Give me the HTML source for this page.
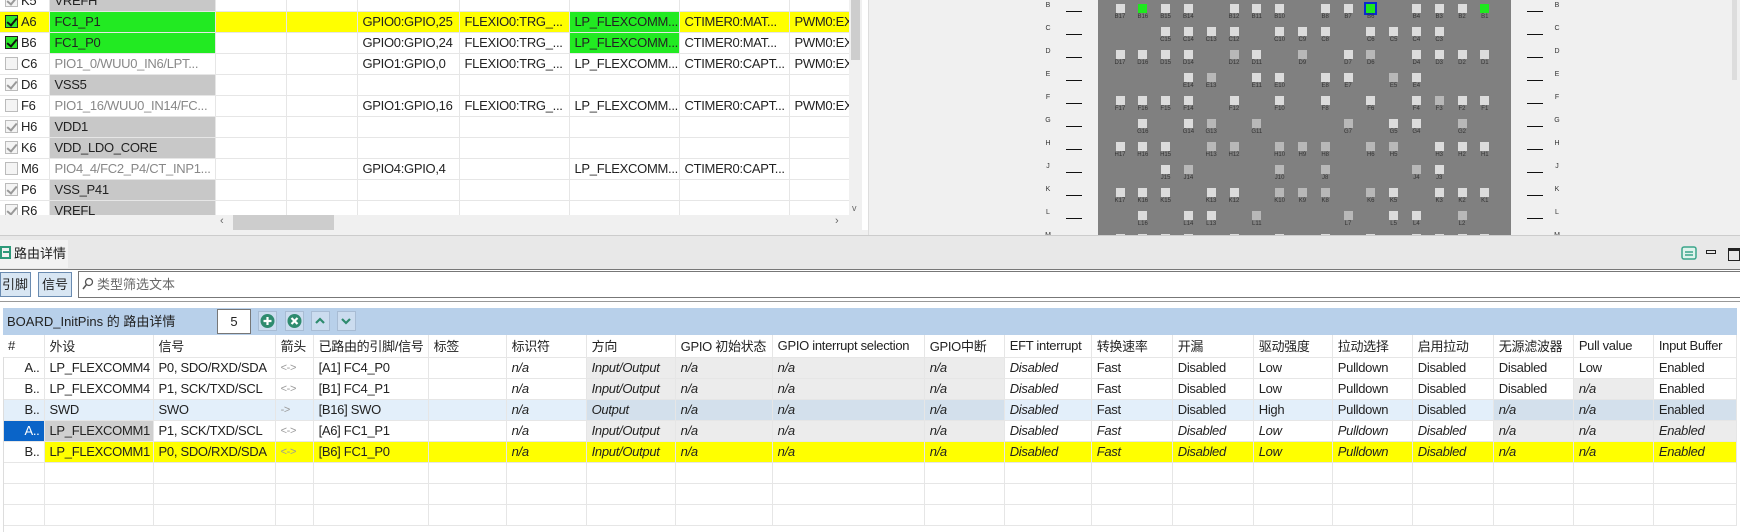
<!DOCTYPE html>
<html><head><meta charset="utf-8">
<style>
*{box-sizing:border-box;margin:0;padding:0}
body{width:1740px;height:532px;overflow:hidden;background:#fff;font-family:"Liberation Sans","Noto Sans CJK SC",sans-serif;font-size:13px;color:#222;position:relative}
.abs{position:absolute}
table{border-collapse:collapse;table-layout:fixed}
td{white-space:nowrap;overflow:hidden;padding:0 0 0 5px;border-right:1px solid #e6e6e6;border-bottom:1px solid #e6e6e6;height:21px;letter-spacing:-0.3px}
#top td{height:21px}
.cb{display:inline-block;width:13px;height:13px;border:1px solid #bbb;background:#f4f4f4;vertical-align:-2px;margin-right:3px;position:relative}
.cb.on{border-color:#222;background:#2ce62c}
.cb.ck::after{content:"";position:absolute;left:3px;top:0px;width:4px;height:8px;border:solid #999;border-width:0 2px 2px 0;transform:rotate(40deg)}
.cb.on::after{border-color:#111}
.g{background:#c8c8c8}.gr{background:#22ea22}.y{background:#ffff00}.gy{color:#888}
#bt td{height:21px}
.i{font-style:italic}
.pg{background:#ececec}
.sw td{background:#e3effa}
.sw td.pb{background:#d3e0ec}
.yl td{background:#ffff00}
.arr{color:#999;font-size:11px}
.pin{position:absolute;width:9px;height:9px;background:#dcdcdc}
.pl{position:absolute;font-size:6px;color:#333;width:20px;text-align:center}
</style></head><body>

<div class="abs" style="left:0;top:0;width:870px;height:236px;background:#fff;overflow:hidden">
<table id="top" class="abs" style="left:0;top:-10px;width:849px">
<colgroup><col style="width:49px"><col style="width:166px"><col style="width:71px"><col style="width:71px"><col style="width:102px"><col style="width:110px"><col style="width:110px"><col style="width:110px"><col style="width:60px"></colgroup>
<tr><td><span class="cb ck"></span>K5</td><td class="g">VREFH</td><td></td><td></td><td></td><td></td><td></td><td></td><td></td></tr>
<tr class="y"><td><span class="cb on ck"></span>A6</td><td class="gr">FC1_P1</td><td></td><td></td><td>GPIO0:GPIO,25</td><td>FLEXIO0:TRG_...</td><td class="gr">LP_FLEXCOMM...</td><td>CTIMER0:MAT...</td><td>PWM0:EX</td></tr>
<tr><td><span class="cb on ck"></span>B6</td><td class="gr">FC1_P0</td><td></td><td></td><td>GPIO0:GPIO,24</td><td>FLEXIO0:TRG_...</td><td class="gr">LP_FLEXCOMM...</td><td>CTIMER0:MAT...</td><td>PWM0:EX</td></tr>
<tr><td><span class="cb"></span>C6</td><td class="gy">PIO1_0/WUU0_IN6/LPT...</td><td></td><td></td><td>GPIO1:GPIO,0</td><td>FLEXIO0:TRG_...</td><td>LP_FLEXCOMM...</td><td>CTIMER0:CAPT...</td><td>PWM0:EX</td></tr>
<tr><td><span class="cb ck"></span>D6</td><td class="g">VSS5</td><td></td><td></td><td></td><td></td><td></td><td></td><td></td></tr>
<tr><td><span class="cb"></span>F6</td><td class="gy">PIO1_16/WUU0_IN14/FC...</td><td></td><td></td><td>GPIO1:GPIO,16</td><td>FLEXIO0:TRG_...</td><td>LP_FLEXCOMM...</td><td>CTIMER0:CAPT...</td><td>PWM0:EX</td></tr>
<tr><td><span class="cb ck"></span>H6</td><td class="g">VDD1</td><td></td><td></td><td></td><td></td><td></td><td></td><td></td></tr>
<tr><td><span class="cb ck"></span>K6</td><td class="g">VDD_LDO_CORE</td><td></td><td></td><td></td><td></td><td></td><td></td><td></td></tr>
<tr><td><span class="cb"></span>M6</td><td class="gy">PIO4_4/FC2_P4/CT_INP1...</td><td></td><td></td><td>GPIO4:GPIO,4</td><td></td><td>LP_FLEXCOMM...</td><td>CTIMER0:CAPT...</td><td></td></tr>
<tr><td><span class="cb ck"></span>P6</td><td class="g">VSS_P41</td><td></td><td></td><td></td><td></td><td></td><td></td><td></td></tr>
<tr><td><span class="cb ck"></span>R6</td><td class="g">VREFL</td><td></td><td></td><td></td><td></td><td></td><td></td><td></td></tr>
</table>
<div class="abs" style="left:849px;top:0;width:13px;height:215px;background:#f0f0f0"><div style="position:absolute;top:0;left:2px;width:9px;height:60px;background:#cdcdcd"></div><div style="position:absolute;bottom:2px;left:3px;font-size:9px;color:#666">v</div></div>
<div class="abs" style="left:0;top:215px;width:862px;height:15px;background:#f0f0f0">
<div style="position:absolute;left:233px;top:0;width:101px;height:15px;background:#cdcdcd"></div>
<div style="position:absolute;left:220px;top:0;font-size:11px;color:#666">&lsaquo;</div>
<div style="position:absolute;left:835px;top:0;font-size:11px;color:#666">&rsaquo;</div></div>
<div class="abs" style="left:0;top:230px;width:870px;height:6px;background:#f0f0f0"></div>
</div>
<div class="abs" style="left:868px;top:0;width:6px;height:236px;background:#f0f0f0;border-left:1px solid #ddd"></div>

<div class="abs" id="chip" style="left:874px;top:0;width:866px;height:236px;background:#f0f0f0;overflow:hidden">
<div class="abs" style="left:224px;top:0;width:413px;height:236px;background:#808080"></div>
<div class="abs" style="left:858px;top:0;width:5px;height:80px;background:#ddd"></div>
</div>
<div class="abs" style="left:0;top:235px;width:1740px;height:1px;background:#ccc"></div>

<div class="abs" style="left:0;top:236px;width:1740px;height:34px;background:#e8e8e8;border-bottom:1px solid #777"></div>
<div class="abs" style="left:0;top:240px;width:68px;height:28px;background:#f2f2f2;font-size:13px;line-height:28px;padding-left:14px">路由详情</div>
<svg class="abs" style="left:0;top:246px" width="12" height="14"><rect x="1" y="1" width="9" height="11" fill="none" stroke="#2e9a7a" stroke-width="2"/><line x1="3" y1="6" x2="9" y2="6" stroke="#2e9a7a" stroke-width="2"/></svg>
<svg class="abs" style="left:1681px;top:246px" width="16" height="16"><rect x="1" y="1" width="14" height="12" rx="2" fill="#dff3ec" stroke="#3aa58a" stroke-width="1.5"/><line x1="4" y1="6" x2="12" y2="6" stroke="#3aa58a" stroke-width="1.5"/><line x1="4" y1="9" x2="12" y2="9" stroke="#3aa58a" stroke-width="1.5"/></svg>
<div class="abs" style="left:1706px;top:250px;width:10px;height:4px;border:1px solid #222"></div>
<div class="abs" style="left:1728px;top:248px;width:12px;height:13px;border:1px solid #222;border-top-width:3px"></div>

<div class="abs" style="left:0;top:272px;width:31px;height:25px;background:#d8e6f3;border:1px solid #6a8bb0;line-height:23px;padding-left:1px">引脚</div>
<div class="abs" style="left:38px;top:272px;width:34px;height:25px;background:#d8e6f3;border:1px solid #6a8bb0;line-height:23px;padding-left:3px">信号</div>
<div class="abs" style="left:78px;top:271px;width:1662px;height:27px;border:1px solid #777;border-right:none;background:#fff;line-height:25px;padding-left:18px;color:#666">类型筛选文本</div>
<svg class="abs" style="left:82px;top:277px" width="12" height="13"><circle cx="7" cy="5" r="3.5" fill="none" stroke="#555" stroke-width="1.3"/><line x1="4.5" y1="7.5" x2="1" y2="12" stroke="#555" stroke-width="1.5"/></svg>
<div class="abs" style="left:0;top:301px;width:1740px;height:1px;background:#999"></div>

<div class="abs" style="left:3px;top:308px;width:1734px;height:27px;background:#b8d0ea;line-height:27px;padding-left:4px">BOARD_InitPins 的 路由详情</div>
<div class="abs" style="left:217px;top:309px;width:34px;height:25px;background:#fff;border:1px solid #777;text-align:center;line-height:23px">5</div>
<div class="abs" style="left:258px;top:311px;width:19px;height:20px;background:#cbdcef;border:1px solid #a8bcd4"></div>
<div class="abs" style="left:285px;top:311px;width:19px;height:20px;background:#cbdcef;border:1px solid #a8bcd4"></div>
<div class="abs" style="left:311px;top:311px;width:19px;height:20px;background:#cbdcef;border:1px solid #a8bcd4"></div>
<div class="abs" style="left:337px;top:311px;width:19px;height:20px;background:#cbdcef;border:1px solid #a8bcd4"></div>
<svg class="abs" style="left:258px;top:311px" width="100" height="20">
<circle cx="9.5" cy="10" r="7" fill="#2e8b6e"/><path d="M9.5 6v8M5.5 10h8" stroke="#fff" stroke-width="2.2"/>
<circle cx="36.5" cy="10" r="7" fill="#2e8b6e"/><path d="M33.5 7l6 6M39.5 7l-6 6" stroke="#fff" stroke-width="2.2"/>
<path d="M58 12l4-4 4 4" fill="none" stroke="#2e8b6e" stroke-width="2.2"/>
<path d="M84 8l4 4 4-4" fill="none" stroke="#2e8b6e" stroke-width="2.2"/>
</svg>

<table id="bt" class="abs" style="left:3px;top:335px;width:1734px">
<colgroup><col style="width:41px"><col style="width:109px"><col style="width:122px"><col style="width:38px"><col style="width:115px"><col style="width:78px"><col style="width:80px"><col style="width:89px"><col style="width:97px"><col style="width:152px"><col style="width:80px"><col style="width:87px"><col style="width:81px"><col style="width:81px"><col style="width:79px"><col style="width:80px"><col style="width:81px"><col style="width:80px"><col style="width:80px"><col style="width:83px"></colgroup>
<tr style="height:22px"><td>#</td><td>外设</td><td>信号</td><td>箭头</td><td>已路由的引脚/信号</td><td>标签</td><td>标识符</td><td>方向</td><td>GPIO 初始状态</td><td>GPIO interrupt selection</td><td>GPIO中断</td><td>EFT interrupt</td><td>转换速率</td><td>开漏</td><td>驱动强度</td><td>拉动选择</td><td>启用拉动</td><td>无源滤波器</td><td>Pull value</td><td>Input Buffer</td></tr>
<tr><td style="text-align:right;padding-right:4px">A..</td><td>LP_FLEXCOMM4</td><td>P0, SDO/RXD/SDA</td><td class="arr">&lt;-&gt;</td><td>[A1] FC4_P0</td><td></td><td class="i">n/a</td><td class="i pg">Input/Output</td><td class="i pg">n/a</td><td class="i pg">n/a</td><td class="i pg">n/a</td><td class="i">Disabled</td><td>Fast</td><td>Disabled</td><td>Low</td><td>Pulldown</td><td>Disabled</td><td>Disabled</td><td>Low</td><td>Enabled</td></tr>
<tr><td style="text-align:right;padding-right:4px">B..</td><td>LP_FLEXCOMM4</td><td>P1, SCK/TXD/SCL</td><td class="arr">&lt;-&gt;</td><td>[B1] FC4_P1</td><td></td><td class="i">n/a</td><td class="i pg">Input/Output</td><td class="i pg">n/a</td><td class="i pg">n/a</td><td class="i pg">n/a</td><td class="i">Disabled</td><td>Fast</td><td>Disabled</td><td>Low</td><td>Pulldown</td><td>Disabled</td><td>Disabled</td><td class="i pg">n/a</td><td>Enabled</td></tr>
<tr class="sw"><td style="text-align:right;padding-right:4px">B..</td><td>SWD</td><td>SWO</td><td class="arr">-&gt;</td><td>[B16] SWO</td><td></td><td class="i">n/a</td><td class="i pb">Output</td><td class="i pb">n/a</td><td class="i pb">n/a</td><td class="i pb">n/a</td><td class="i">Disabled</td><td>Fast</td><td>Disabled</td><td>High</td><td>Pulldown</td><td>Disabled</td><td class="i pb">n/a</td><td class="i pb">n/a</td><td class="pb">Enabled</td></tr>
<tr><td style="text-align:right;padding-right:4px;background:#0a64c8;color:#fff">A..</td><td style="background:#cfcfcf">LP_FLEXCOMM1</td><td>P1, SCK/TXD/SCL</td><td class="arr">&lt;-&gt;</td><td>[A6] FC1_P1</td><td></td><td class="i">n/a</td><td class="i pg">Input/Output</td><td class="i pg">n/a</td><td class="i pg">n/a</td><td class="i pg">n/a</td><td class="i">Disabled</td><td class="i">Fast</td><td class="i">Disabled</td><td class="i">Low</td><td class="i">Pulldown</td><td class="i">Disabled</td><td class="i pg">n/a</td><td class="i pg">n/a</td><td class="i pg">Enabled</td></tr>
<tr class="yl"><td style="text-align:right;padding-right:4px;background:#fff">B..</td><td>LP_FLEXCOMM1</td><td>P0, SDO/RXD/SDA</td><td class="arr">&lt;-&gt;</td><td>[B6] FC1_P0</td><td></td><td class="i">n/a</td><td class="i">Input/Output</td><td class="i">n/a</td><td class="i">n/a</td><td class="i">n/a</td><td class="i">Disabled</td><td class="i">Fast</td><td class="i">Disabled</td><td class="i">Low</td><td class="i">Pulldown</td><td class="i">Disabled</td><td class="i">n/a</td><td class="i">n/a</td><td class="i">Enabled</td></tr>
<tr><td></td><td></td><td></td><td></td><td></td><td></td><td></td><td></td><td></td><td></td><td></td><td></td><td></td><td></td><td></td><td></td><td></td><td></td><td></td><td></td></tr>
<tr><td></td><td></td><td></td><td></td><td></td><td></td><td></td><td></td><td></td><td></td><td></td><td></td><td></td><td></td><td></td><td></td><td></td><td></td><td></td><td></td></tr>
<tr><td></td><td></td><td></td><td></td><td></td><td></td><td></td><td></td><td></td><td></td><td></td><td></td><td></td><td></td><td></td><td></td><td></td><td></td><td></td><td></td></tr>
</table>
<div class="abs" style="left:3px;top:357px;width:1px;height:175px;background:#ddd"></div>

<script>
(function(){
var c=document.getElementById('chip');
var rows={B:[17,16,15,14,12,11,10,8,7,6,4,3,2,1],C:[15,14,13,12,10,9,8,6,5,4,3],D:[17,16,15,14,12,11,9,7,6,4,3,2,1],E:[14,13,11,10,8,7,5,4],F:[17,16,15,14,12,10,8,6,4,3,2,1],G:[16,14,13,11,7,5,4,2],H:[17,16,15,13,12,10,9,8,6,5,3,2,1],J:[15,14,10,8,4,3],K:[17,16,15,13,12,10,9,8,6,5,3,2,1],L:[16,14,13,11,7,5,4,2],M:[17,16,15,14,12,10,8,6,4,3,2,1]};
var dark={D12:1,D9:1,D6:1,E13:1,E5:1,F3:1,G11:1,G7:1,G2:1,G13:1,H13:1,H12:1,H10:1,H9:1,H8:1,H6:1,H5:1,J14:1,J10:1,J8:1,J4:1,K10:1,K9:1,K8:1,K6:1,L11:1,L7:1,L2:1};
var green={B16:1,B6:1,B1:1};
var keys=Object.keys(rows),h='';
keys.forEach(function(r,i){
 var y=4+i*23;
 h+='<div class="pl" style="left:164px;top:'+(y-2)+'px;font-size:7px;width:20px">'+r+'</div>';
 h+='<div class="abs" style="left:192px;top:'+(y+7)+'px;width:16px;height:1px;background:#111"></div>';
 h+='<div class="abs" style="left:653px;top:'+(y+7)+'px;width:16px;height:1px;background:#111"></div>';
 h+='<div class="pl" style="left:678px;top:'+(y-2)+'px;font-size:7px;width:10px">'+r+'</div>';
 rows[r].forEach(function(n){
  var x=1120-874+(17-n)*22.8-4.5, k=r+n;
  var col=green[k]?'#1ee81e':(dark[k]?'#b8b8b8':'#dcdcdc');
  var st=(k=='B6')?'outline:2px solid #0a2ad0;':'';
  h+='<div class="pin" style="left:'+x+'px;top:'+y+'px;background:'+col+';'+st+'"></div>';
  h+='<div class="pl" style="left:'+(x-5.5)+'px;top:'+(y+10)+'px">'+k+'</div>';
 });
});
c.insertAdjacentHTML('beforeend',h);
})();
</script>
</body></html>
